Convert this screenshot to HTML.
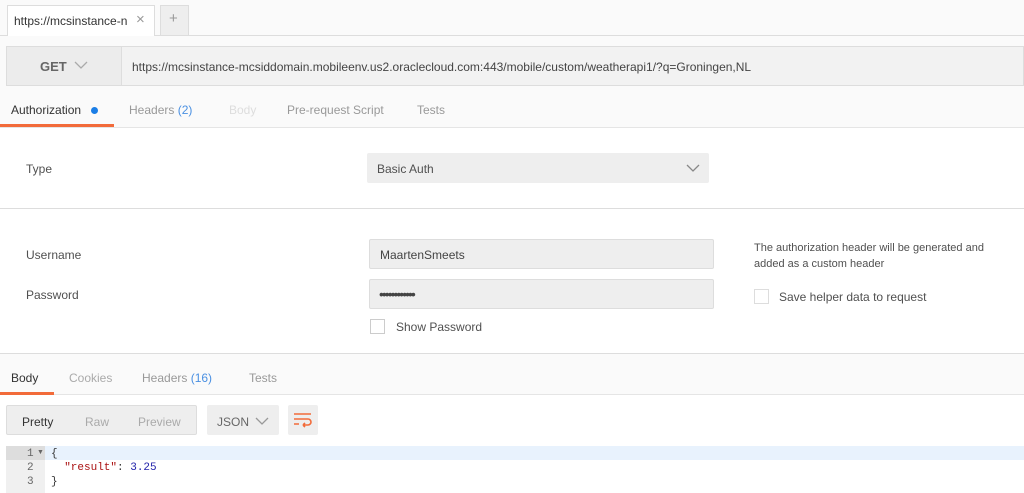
<!DOCTYPE html><html><head><style>
*{box-sizing:border-box;margin:0;padding:0}
body{width:1024px;height:493px;overflow:hidden;background:#fff;font-family:"Liberation Sans",sans-serif;font-size:12px;color:#505050;position:relative}
.a{position:absolute}
.t{position:absolute;white-space:nowrap}
</style></head><body>
<div class="a" style="left:0;top:0;width:1024px;height:36px;background:#fafafa;border-bottom:1px solid #ddd"></div>
<div class="a" style="left:7px;top:5px;width:148px;height:32px;background:#fff;border:1px solid #ddd;border-bottom:none"></div>
<div class="t" style="left:14px;top:14px;color:#333">https://mcsinstance-n</div>
<div class="t" style="left:136px;top:11px;font-size:15px;color:#999">×</div>
<div class="a" style="left:160px;top:5px;width:29px;height:30px;background:#eee;border:1px solid #ddd;border-bottom:none"></div>
<div class="t" style="left:169px;top:10px;font-size:15px;color:#999">+</div>
<div class="a" style="left:0;top:36px;width:1024px;height:91px;background:#fafafa"></div>
<div class="a" style="left:6px;top:46px;width:1018px;height:40px;background:#f2f2f2;border:1px solid #ddd"></div>
<div class="a" style="left:6px;top:46px;width:116px;height:40px;background:#ececec;border:1px solid #ddd"></div>
<div class="t" style="left:40px;top:59px;font-size:13px;font-weight:bold;color:#666">GET</div>
<svg class="a" style="left:74px;top:61px" width="14" height="9"><path d="M1 1l6 6 6-6" fill="none" stroke="#aaa" stroke-width="1.3"/></svg>
<div class="t" style="left:132px;top:60px;color:#444;font-size:12px">https://mcsinstance-mcsiddomain.mobileenv.us2.oraclecloud.com:443/mobile/custom/weatherapi1/?q=Groningen,NL</div>
<div class="t" style="left:11px;top:103px;color:#333">Authorization</div>
<div class="a" style="left:91px;top:107px;width:7px;height:7px;border-radius:50%;background:#1b7ee6"></div>
<div class="t" style="left:129px;top:103px;color:#999">Headers <span style="color:#4a90e2">(2)</span></div>
<div class="t" style="left:229px;top:103px;color:#ddd">Body</div>
<div class="t" style="left:287px;top:103px;color:#999">Pre-request Script</div>
<div class="t" style="left:417px;top:103px;color:#999">Tests</div>
<div class="a" style="left:0;top:124px;width:114px;height:3px;background:#f26b3a"></div>
<div class="a" style="left:0;top:127px;width:1024px;height:1px;background:#e5e5e5"></div>
<div class="t" style="left:26px;top:162px">Type</div>
<div class="a" style="left:367px;top:153px;width:342px;height:30px;background:#eee;border-radius:2px"></div>
<div class="t" style="left:377px;top:162px">Basic Auth</div>
<svg class="a" style="left:686px;top:164px" width="14" height="9"><path d="M1 1l6 6 6-6" fill="none" stroke="#888" stroke-width="1.3"/></svg>
<div class="a" style="left:0;top:208px;width:1024px;height:1px;background:#ddd"></div>
<div class="t" style="left:26px;top:248px">Username</div>
<div class="t" style="left:26px;top:288px">Password</div>
<div class="a" style="left:369px;top:239px;width:345px;height:30px;background:#eee;border:1px solid #ddd;border-radius:2px"></div>
<div class="t" style="left:380px;top:248px;color:#444">MaartenSmeets</div>
<div class="a" style="left:369px;top:279px;width:345px;height:30px;background:#eee;border:1px solid #ddd;border-radius:2px"></div>
<div class="t" style="left:379px;top:286px;color:#444;font-size:14px;letter-spacing:-2px">••••••••••••</div>
<div class="a" style="left:370px;top:319px;width:15px;height:15px;border:1px solid #ccc;background:#fff"></div>
<div class="t" style="left:396px;top:320px">Show Password</div>
<div class="t" style="left:754px;top:240px;font-size:11px;line-height:16px">The authorization header will be generated and<br>added as a custom header</div>
<div class="a" style="left:754px;top:289px;width:15px;height:15px;border:1px solid #ddd;background:#fff"></div>
<div class="t" style="left:779px;top:290px">Save helper data to request</div>
<div class="a" style="left:0;top:353px;width:1024px;height:42px;background:#fafafa;border-top:1px solid #ddd;border-bottom:1px solid #e5e5e5"></div>
<div class="t" style="left:11px;top:371px;color:#333">Body</div>
<div class="t" style="left:69px;top:371px;color:#aaa">Cookies</div>
<div class="t" style="left:142px;top:371px;color:#999">Headers <span style="color:#4a90e2">(16)</span></div>
<div class="t" style="left:249px;top:371px;color:#999">Tests</div>
<div class="a" style="left:0;top:392px;width:54px;height:3px;background:#f26b3a"></div>
<div class="a" style="left:6px;top:405px;width:191px;height:30px;background:#eee;border:1px solid #ddd;border-radius:2px"></div>
<div class="t" style="left:22px;top:415px;color:#333">Pretty</div>
<div class="t" style="left:85px;top:415px;color:#aaa">Raw</div>
<div class="t" style="left:138px;top:415px;color:#aaa">Preview</div>
<div class="a" style="left:207px;top:405px;width:72px;height:30px;background:#eee;border-radius:2px"></div>
<div class="t" style="left:217px;top:415px;color:#666">JSON</div>
<svg class="a" style="left:255px;top:417px" width="14" height="9"><path d="M1 1l6 6 6-6" fill="none" stroke="#999" stroke-width="1.3"/></svg>
<div class="a" style="left:288px;top:405px;width:30px;height:30px;background:#eee;border-radius:2px"></div>
<svg class="a" style="left:293px;top:411px" width="20" height="18"><path d="M1 3h17M1 8h14a3 3 0 0 1 0 6h-5M1 13h5M10 14l2-2M10 14l2 2" fill="none" stroke="#f26b3a" stroke-width="1.6"/></svg>
<div class="a" style="left:6px;top:446px;width:1018px;height:14px;background:#e8f2fd"></div>
<div class="a" style="left:6px;top:446px;width:39px;height:47px;background:#f0f0f0"></div>
<div class="a" style="left:6px;top:446px;width:39px;height:14px;background:#ddd"></div>
<div class="t" style="left:27px;top:447px;font-family:'Liberation Mono',monospace;font-size:11px;line-height:14px;color:#666;text-align:right">1<br>2<br>3</div>
<div class="t" style="left:37px;top:449px;font-size:7px;color:#666">▼</div>
<div class="t" style="left:51px;top:447px;font-family:'Liberation Mono',monospace;font-size:11px;line-height:14px;color:#333">{<br>&nbsp;&nbsp;<span style="color:#a11">"result"</span>: <span style="color:#22a">3.25</span><br>}</div>
</body></html>
